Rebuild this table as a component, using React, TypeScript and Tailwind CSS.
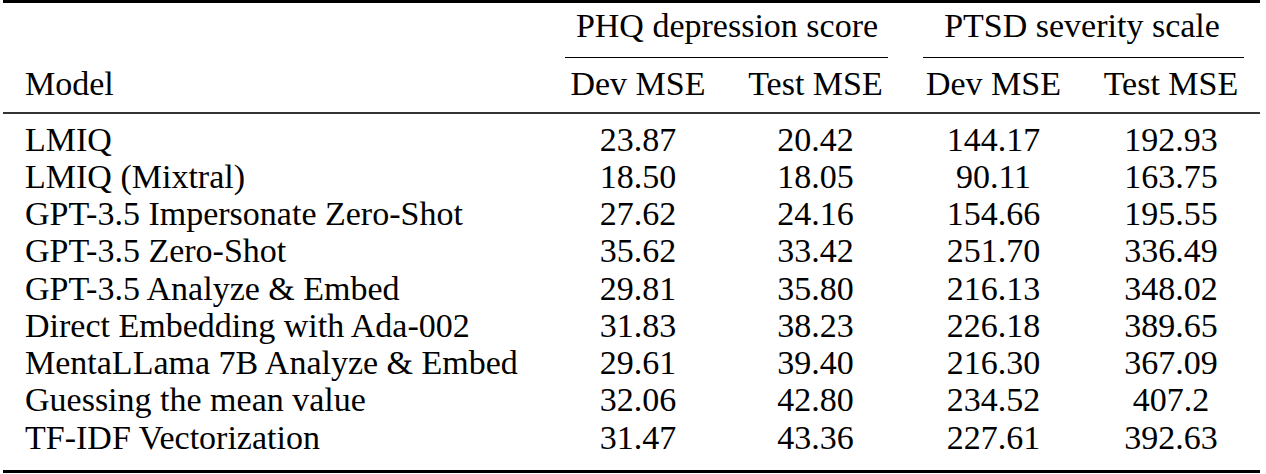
const rows: [string, string, string, string, string][] = [
  ["LMIQ", "23.87", "20.42", "144.17", "192.93"],
  ["LMIQ (Mixtral)", "18.50", "18.05", "90.11", "163.75"],
  ["GPT-3.5 Impersonate Zero-Shot", "27.62", "24.16", "154.66", "195.55"],
  ["GPT-3.5 Zero-Shot", "35.62", "33.42", "251.70", "336.49"],
  ["GPT-3.5 Analyze & Embed", "29.81", "35.80", "216.13", "348.02"],
  ["Direct Embedding with Ada-002", "31.83", "38.23", "226.18", "389.65"],
  ["MentaLLama 7B Analyze & Embed", "29.61", "39.40", "216.30", "367.09"],
  ["Guessing the mean value", "32.06", "42.80", "234.52", "407.2"],
  ["TF-IDF Vectorization", "31.47", "43.36", "227.61", "392.63"],
];

const grid = "grid grid-cols-[546.5px_177px_178px_178px_177px]";

export default function App() {
  return (
    <div className="w-[1266px] h-[474px] bg-white text-black font-['Liberation_Serif',serif] text-[34px] leading-[37px]">
      <div className="ml-[3px] w-[1257px] flex flex-col">
        {/* toprule */}
        <div className="h-[3px] bg-black" />

        <div className={`${grid} pt-[4px]`}>
          <div />
          <div className="col-span-2 text-center">PHQ depression score</div>
          <div className="col-span-2 text-center">PTSD severity scale</div>
        </div>

        {/* cmidrules */}
        <div className={`${grid} pt-[13px]`}>
          <div />
          <div className="col-span-2 pl-[15px] pr-[17px]">
            <div className="h-px bg-black" />
          </div>
          <div className="col-span-2 pl-[18px] pr-[16px]">
            <div className="h-px bg-black" />
          </div>
        </div>

        <div className={`${grid} pt-[7px]`}>
          <div className="pl-[22px]">Model</div>
          <div className="text-center">Dev MSE</div>
          <div className="text-center">Test MSE</div>
          <div className="text-center">Dev MSE</div>
          <div className="text-center">Test MSE</div>
        </div>

        {/* midrule */}
        <div className="mt-[10px] h-[2px] bg-[#333]" />

        <div className="pt-[6.5px] leading-[37.25px]">
          {rows.map((r) => (
            <div key={r[0]} className={grid}>
              <div className="pl-[22px] whitespace-nowrap">{r[0]}</div>
              <div className="text-center">{r[1]}</div>
              <div className="text-center">{r[2]}</div>
              <div className="text-center">{r[3]}</div>
              <div className="text-center">{r[4]}</div>
            </div>
          ))}
        </div>

        {/* bottomrule */}
        <div className="mt-[14px] h-[3px] bg-black" />
      </div>
    </div>
  );
}
